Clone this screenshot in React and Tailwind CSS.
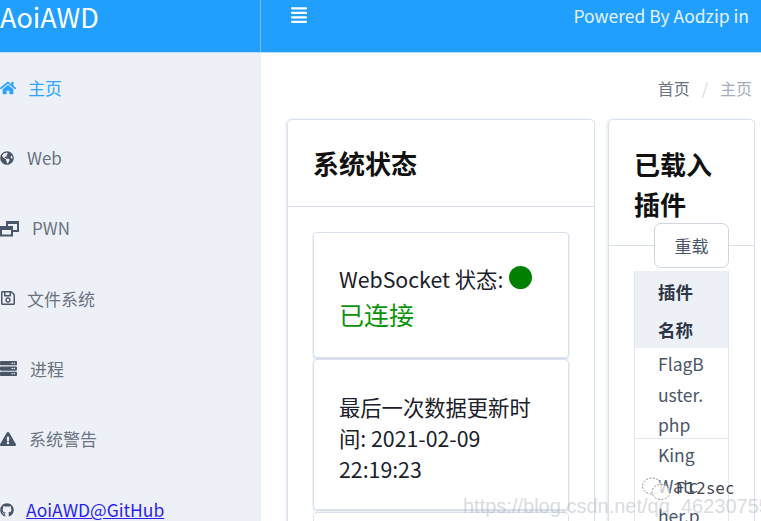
import { FaHome, FaGlobeAmericas, FaRegSave, FaServer, FaExclamationTriangle, FaGithub, FaAlignJustify } from 'react-icons/fa'

function RestoreIcon() {
  return (
    <svg width="19" height="17" viewBox="0 0 19 17" fill="none" stroke="#4a5568" strokeWidth="2" className="shrink-0">
      <path d="M7 6V2h11v9h-5" />
      <rect x="1" y="7" width="11" height="8.5" />
      <path d="M1 8.5h11" strokeWidth="3" />
      <path d="M7 2.5h11" strokeWidth="3" />
    </svg>
  )
}

const nav = [
  { icon: <FaHome size={16} className="text-[#2ea3ff]" />, gap: 'gap-[12px]', label: '主页', active: true },
  { icon: <FaGlobeAmericas size={14} className="text-[#4a5568]" />, gap: 'gap-[13px]', label: 'Web' },
  { icon: <RestoreIcon />, gap: 'gap-[13px]', label: 'PWN' },
  { icon: <FaRegSave size={16} className="text-[#4a5568]" />, gap: 'gap-[11px]', label: '文件系统' },
  { icon: <FaServer size={17} className="text-[#4a5568]" />, gap: 'gap-[13px]', label: '进程' },
  { icon: <FaExclamationTriangle size={16} className="text-[#4a5568]" />, gap: 'gap-[13px]', label: '系统警告' },
]

export default function App() {
  return (
    <div className="relative flex h-[521px] w-[761px] flex-col overflow-hidden bg-white font-['Noto_Sans_CJK_SC','Noto_Sans',sans-serif] text-[#1a202c]">
      {/* top bar */}
      <header className="flex h-[53px] shrink-0 border-b border-[#b9dcfb] bg-[#209fff] text-white">
        <div className="h-full w-[261px] shrink-0 border-r border-[#6fbefc] text-[27px] leading-[33px]">AoiAWD</div>
        <div className="flex flex-1 items-start justify-between pl-[29px] pr-[12px]">
          <FaAlignJustify size={18} className="mt-[6px]" />
          <span className="text-[17.5px] leading-[31px] text-[#e4f3ff]">Powered By Aodzip in</span>
        </div>
      </header>

      <div className="flex min-h-0 flex-1">
        {/* sidebar */}
        <aside className="flex w-[261px] shrink-0 flex-col bg-[#edf1f7]">
          {nav.map(({ icon, gap, label, active }) => (
            <div
              key={label}
              className={`flex h-[70.1px] shrink-0 items-center text-[17px] ${gap} ${active ? 'text-[#2ea3ff]' : 'text-[#6b7280]'}`}
            >
              {icon}
              {label}
            </div>
          ))}
          <div className="flex h-[73px] shrink-0 items-center gap-[12px] text-[17.5px]">
            <FaGithub size={14} className="text-[#4a5568]" />
            <a href="#" className="text-[#2a1ff0] underline">AoiAWD@GitHub</a>
          </div>
        </aside>

        {/* main */}
        <main className="min-w-0 flex-1 pl-[26px] pr-[6px]">
          <div className="flex h-[66px] items-center justify-end pr-[3px] pt-[3px] text-[16px]">
            <span className="text-[#6b7280]">首页</span>
            <span className="mx-[12px] text-[#d3dbe6]">/</span>
            <span className="text-[#a4aebd]">主页</span>
          </div>

          <div className="flex items-start gap-[13px]">
            {/* system status */}
            <section className="h-[500px] w-[308px] shrink-0 rounded-[5px] border border-[#d9e1ec] shadow-[-1px_0_3px_#e2e8f0]">
              <div className="flex h-[87px] items-center border-b border-[#d9e1ec] pb-[2px] pl-[25px] text-[26px] font-bold text-[#111]">系统状态</div>
              <div className="flex flex-col gap-[2px] px-[25px] pt-[25px] text-[21.3px] leading-[31px]">
                <div className="h-[126px] rounded-[4px] border border-[#d9e1ec] pl-[25px] pt-[30px] shadow-[0_1px_2px_#cbd5e0]">
                  <div className="flex items-center gap-[6px]">
                    WebSocket 状态:
                    <span className="-mt-[3px] inline-block h-[23px] w-[23px] rounded-full bg-[#008000]" />
                  </div>
                  <div className="mt-[2px] text-[25px] leading-[36px] text-[#0b930b]">已连接</div>
                </div>
                <div className="-mt-[1px] h-[151px] rounded-[4px] border border-[#d9e1ec] px-[25px] pt-[31px] shadow-[0_1px_2px_#cbd5e0]">
                  最后一次数据更新时间: 2021-02-09 22:19:23
                </div>
                <div className="h-[60px] rounded-[4px] border border-[#d9e1ec]" />
              </div>
            </section>

            {/* loaded plugins */}
            <section className="relative h-[500px] w-[147px] shrink-0 rounded-[5px] border border-[#d9e1ec] shadow-[-1px_0_3px_#e2e8f0]">
              <div className="h-[126px] border-b border-[#d9e1ec] pl-[25px] pr-[20px] pt-[24px] text-[26px] font-bold leading-[40px] text-[#111]">已载入插件</div>
              <button className="absolute left-[45px] top-[103px] h-[45px] w-[75px] rounded-[7px] border border-[#cfd6df] bg-white text-[17px] text-[#4a5568]">重载</button>
              <div className="ml-[25px] mt-[25px] w-[95px] border-x border-[#e2e8f0] text-[17.5px] text-[#4a5568]">
                <div className="h-[77px] bg-[#edf1f7] pl-[23px] pr-[22px] pt-[2px] font-bold leading-[38px] text-[#2d3748]">插件名称</div>
                <div className="h-[91px] border-b border-[#e2e8f0] pl-[23px] pr-[22px] pt-[1px] leading-[30.5px] [overflow-wrap:anywhere]">FlagBuster.php</div>
                <div className="pl-[23px] pr-[22px] pt-[1px] leading-[30.5px] [overflow-wrap:anywhere]">KingWatcher.php</div>
              </div>
            </section>
          </div>
        </main>
      </div>

      {/* watermarks from the source image */}
      <span className="absolute left-[463px] top-[494px] whitespace-nowrap font-['Liberation_Sans',sans-serif] text-[20px] leading-[24px] text-[#9aa3ad]/40">https://blog.csdn.net/qq_46230755</span>
      <div className="absolute left-[641px] top-[476px] flex items-center gap-[3px]">
        <svg width="32" height="26" viewBox="0 0 32 26" fill="#ffffffb0" stroke="#8a8f96" strokeWidth="1" strokeDasharray="2 1.5">
          <ellipse cx="11" cy="10" rx="9.5" ry="8" />
          <ellipse cx="20" cy="16" rx="9" ry="7.5" />
        </svg>
        <span className="font-['DejaVu_Sans',sans-serif] text-[15px] tracking-[1px] text-[#3f4650]">F12sec</span>
      </div>
    </div>
  )
}
